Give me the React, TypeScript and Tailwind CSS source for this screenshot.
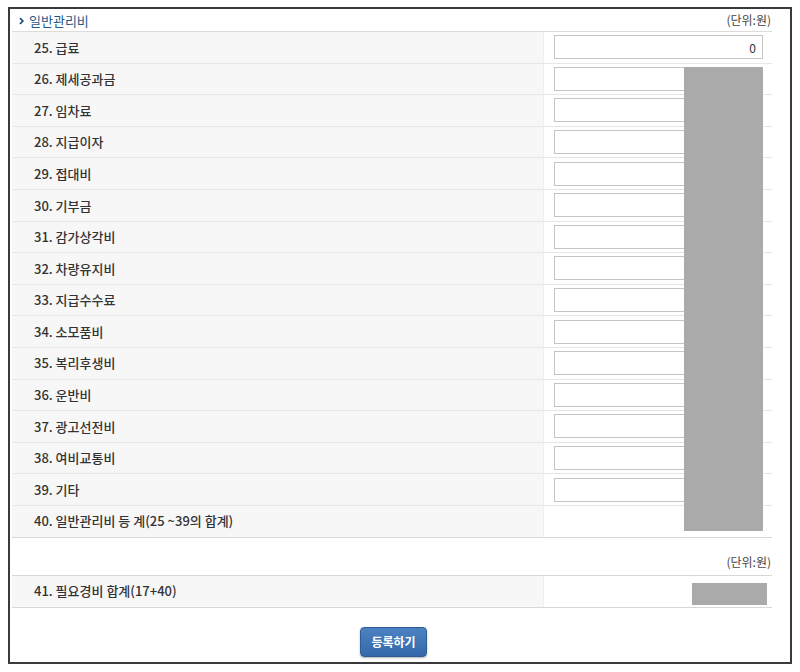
import React from "react";

const rows = [
  "25. 급료",
  "26. 제세공과금",
  "27. 임차료",
  "28. 지급이자",
  "29. 접대비",
  "30. 기부금",
  "31. 감가상각비",
  "32. 차량유지비",
  "33. 지급수수료",
  "34. 소모품비",
  "35. 복리후생비",
  "36. 운반비",
  "37. 광고선전비",
  "38. 여비교통비",
  "39. 기타",
];

const font = { fontFamily: '"Noto Sans CJK KR", "Noto Sans", sans-serif' };

export default function App() {
  return (
    <div className="w-[800px] h-[672px] bg-white pt-[7px] pl-[8px]" style={font}>
      <div className="relative w-[784px] h-[657px] border-2 border-[#3a3a3a] pl-[2px] pr-[18px] flex flex-col">
        <div className="h-[23px] flex items-center justify-between border-b border-[#dcdcdc] pl-[7px]">
          <div className="flex items-center gap-[5px] text-[13px] text-[#1e5a8a] leading-none">
            <svg width="5" height="8" viewBox="0 0 5 8" className="mt-[1px]">
              <path d="M1 1 L3.8 4 L1 7" fill="none" stroke="#1e4f7a" strokeWidth="1.8" />
            </svg>
            <span>일반관리비</span>
          </div>
          <span className="text-[12px] text-[#444] pr-[1px] leading-none">(단위:원)</span>
        </div>
        {rows.map((r, i) => (
          <div key={r} className="h-[31.6px] flex border-b border-[#e6e6e6]">
            <div className="w-[532px] bg-[#f7f7f7] border-r border-[#efefef] flex items-center pl-[22px] text-[13px] font-medium text-[#333]">
              {r}
            </div>
            <div className="flex-1 bg-white flex items-center pl-[10px] pr-[9px]">
              <input
                readOnly
                value={i === 0 ? "0" : ""}
                className="w-full h-[24px] border border-[#c4c4c4] bg-white text-right pr-[6px] text-[12px] text-[#333] outline-none"
                style={font}
              />
            </div>
          </div>
        ))}
        <div className="h-[31.6px] flex border-b border-[#d8d8d8]">
          <div className="w-[532px] bg-[#f7f7f7] border-r border-[#efefef] flex items-center pl-[22px] text-[13px] font-medium text-[#333]">
            40. 일반관리비 등 계(25 ~39의 합계)
          </div>
          <div className="flex-1 bg-white" />
        </div>
        <div className="h-[38px] flex items-end justify-end pb-[7px] border-b border-[#d8d8d8]">
          <span className="text-[12px] text-[#444] pr-[1px] leading-none">(단위:원)</span>
        </div>
        <div className="h-[32px] flex border-b border-[#d8d8d8]">
          <div className="w-[532px] bg-[#f7f7f7] border-r border-[#efefef] flex items-center pl-[22px] text-[13px] font-medium text-[#333]">
            41. 필요경비 합계(17+40)
          </div>
          <div className="flex-1 bg-white flex items-start justify-end pr-[5px] pt-[7px]">
            <div className="w-[75px] h-[22px] bg-[#aaaaaa]" />
          </div>
        </div>
        <div className="flex justify-center pt-[19px]">
          <button
            className="ml-[3px] w-[67px] h-[30px] rounded-[4px] bg-gradient-to-b from-[#4c82c2] to-[#3468aa] border border-[#2d5d99] text-white text-[12px] font-bold shadow-[0_1px_2px_rgba(0,0,0,0.3)]"
            style={font}
          >
            등록하기
          </button>
        </div>
        <div className="absolute left-[674px] top-[58px] w-[79px] h-[464px] bg-[#aaaaaa]" />
      </div>
    </div>
  );
}
